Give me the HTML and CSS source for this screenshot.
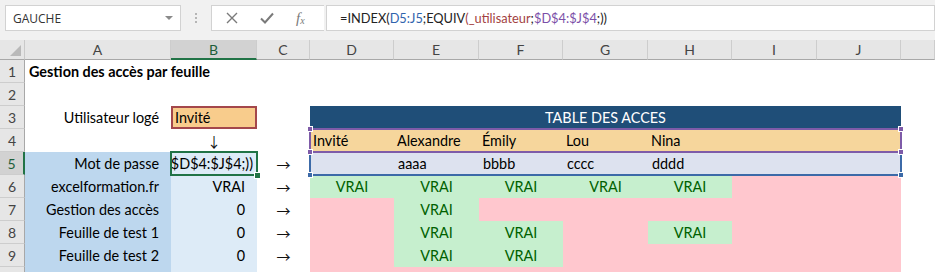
FILE: index.html
```html
<!DOCTYPE html>
<html lang="fr">
<head>
<meta charset="utf-8">
<title>Gestion des accès</title>
<link rel="stylesheet" href="styles.css">
</head>
<body>
<div class="app">
  <div class="fbar">
    <div class="namebox"><span class="nb-text">GAUCHE</span><span class="caret"></span></div>
    <div class="grip"><i></i><i></i><i></i></div>
    <div class="fbtns">
      <svg class="ico" width="12" height="12" viewBox="0 0 12 12"><path d="M1 1 L11 11 M11 1 L1 11" stroke="#7a7a7a" stroke-width="1.4" fill="none"/></svg>
      <svg class="ico" width="14" height="12" viewBox="0 0 14 12"><path d="M1 6.5 L5 10.5 L13 1.5" stroke="#7a7a7a" stroke-width="2" fill="none"/></svg>
      <span class="fx">f<sub>x</sub></span>
    </div>
    <div class="formula">=INDEX(<span class="c-blue">D5:J5</span>;EQUIV<span class="c-red">(_utilisateur</span>;<span class="c-purple">$D$4:$J$4</span>;))</div>
  </div>

  <div class="sheet">
    <!-- column headers -->
    <div class="corner"><span class="tri"></span></div>
    <div class="ch">A</div><div class="ch ch-sel">B</div><div class="ch">C</div><div class="ch">D</div><div class="ch">E</div><div class="ch">F</div><div class="ch">G</div><div class="ch">H</div><div class="ch">I</div><div class="ch">J</div><div class="ch"></div>

    <!-- row 1 -->
    <div class="rh">1</div>
    <div class="c title">Gestion des accès par feuille</div>
    <div class="c"></div><div class="c"></div><div class="c"></div><div class="c"></div><div class="c"></div><div class="c"></div><div class="c"></div><div class="c"></div><div class="c"></div><div class="c"></div>

    <!-- row 2 -->
    <div class="rh">2</div>
    <div class="c"></div><div class="c"></div><div class="c"></div><div class="c"></div><div class="c"></div><div class="c"></div><div class="c"></div><div class="c"></div><div class="c"></div><div class="c"></div><div class="c"></div>

    <!-- row 3 -->
    <div class="rh">3</div>
    <div class="c r lab">Utilisateur logé</div>
    <div class="c user">Invité</div>
    <div class="c"></div>
    <div class="c tbl-title">TABLE DES ACCES</div>
    <div class="c"></div>

    <!-- row 4 -->
    <div class="rh">4</div>
    <div class="c"></div>
    <div class="c ctr arrow">↓</div>
    <div class="c"></div>
    <div class="c name">Invité</div><div class="c name">Alexandre</div><div class="c name">Émily</div><div class="c name">Lou</div><div class="c name">Nina</div><div class="c name"></div><div class="c name"></div>
    <div class="c"></div>

    <!-- row 5 -->
    <div class="rh rh-sel">5</div>
    <div class="c r lab lbl">Mot de passe</div>
    <div class="c val clip"><span>=INDEX(D5:J5;EQUIV(_utilisateur;$D$4:$J$4;))</span></div>
    <div class="c ctr arrow">→</div>
    <div class="c pw"></div><div class="c pw">aaaa</div><div class="c pw">bbbb</div><div class="c pw">cccc</div><div class="c pw">dddd</div><div class="c pw"></div><div class="c pw"></div>
    <div class="c"></div>

    <!-- row 6 -->
    <div class="rh">6</div>
    <div class="c r lab lbl">excelformation.fr</div>
    <div class="c val r">VRAI</div>
    <div class="c ctr arrow">→</div>
    <div class="c ok">VRAI</div><div class="c ok">VRAI</div><div class="c ok">VRAI</div><div class="c ok">VRAI</div><div class="c ok">VRAI</div><div class="c no"></div><div class="c no"></div>
    <div class="c"></div>

    <!-- row 7 -->
    <div class="rh">7</div>
    <div class="c r lab lbl">Gestion des accès</div>
    <div class="c val r">0</div>
    <div class="c ctr arrow">→</div>
    <div class="c no"></div><div class="c ok">VRAI</div><div class="c no"></div><div class="c no"></div><div class="c no"></div><div class="c no"></div><div class="c no"></div>
    <div class="c"></div>

    <!-- row 8 -->
    <div class="rh">8</div>
    <div class="c r lab lbl">Feuille de test 1</div>
    <div class="c val r">0</div>
    <div class="c ctr arrow">→</div>
    <div class="c no"></div><div class="c ok">VRAI</div><div class="c ok">VRAI</div><div class="c no"></div><div class="c ok">VRAI</div><div class="c no"></div><div class="c no"></div>
    <div class="c"></div>

    <!-- row 9 -->
    <div class="rh">9</div>
    <div class="c r lab lbl">Feuille de test 2</div>
    <div class="c val r">0</div>
    <div class="c ctr arrow">→</div>
    <div class="c no"></div><div class="c ok">VRAI</div><div class="c ok">VRAI</div><div class="c no"></div><div class="c no"></div><div class="c no"></div><div class="c no"></div>
    <div class="c"></div>

    <!-- row 10 -->
    <div class="rh">10</div>
    <div class="c lbl"></div>
    <div class="c val"></div>
    <div class="c"></div>
    <div class="c no"></div><div class="c no"></div><div class="c no"></div><div class="c no"></div><div class="c no"></div><div class="c no"></div><div class="c no"></div>
    <div class="c"></div>

    <!-- range highlights (overlays, out of flow) -->
    <div class="range range-blue"><i class="h tl"></i><i class="h tr"></i><i class="h bl"></i><i class="h br"></i></div>
    <div class="range range-purple"><i class="h tl"></i><i class="h tr"></i><i class="h bl"></i><i class="h br"></i></div>
    <div class="active"><i class="fill"></i></div>
  </div>
</div>
</body>
</html>
```

FILE: styles.css
```css
* { box-sizing: border-box; }

html, body {
  margin: 0;
  padding: 0;
  background: #ffffff;
  overflow: hidden;
}

.app {
  width: 935px;
  height: 272px;
  overflow: hidden;
  font-family: Lato, "Open Sans", sans-serif;
}

/* ---------- formula bar ---------- */
.fbar {
  height: 40px;
  background: #f1f1f1;
  display: flex;
  align-items: flex-start;
  padding-top: 5px;
  padding-left: 5px;
}

.namebox {
  width: 176px;
  height: 26px;
  background: #fff;
  border: 1px solid #d2d2d2;
  display: flex;
  align-items: center;
  justify-content: space-between;
  padding: 0 7px 0 7px;
  font-family: "Open Sans", sans-serif;
  font-size: 12px;
  color: #333;
}

.caret {
  width: 0;
  height: 0;
  border-left: 4px solid transparent;
  border-right: 4px solid transparent;
  border-top: 4px solid #8a8a8a;
}

.grip {
  width: 30px;
  height: 26px;
  display: flex;
  flex-direction: column;
  align-items: center;
  justify-content: center;
  gap: 2px;
}
.grip i {
  display: block;
  width: 2px;
  height: 2px;
  background: #b5b5b5;
}

.fbtns {
  width: 113px;
  height: 26px;
  background: #fff;
  border: 1px solid #d2d2d2;
  border-right: none;
  display: flex;
  align-items: center;
  padding-left: 14px;
  gap: 22px;
}

.fx {
  font-family: "Liberation Serif", serif;
  font-style: italic;
  font-size: 15px;
  color: #7a7a7a;
  line-height: 1;
}
.fx sub {
  font-size: 10px;
  vertical-align: -1px;
}

.formula {
  flex: 1;
  height: 26px;
  background: #fff;
  border: 1px solid #d2d2d2;
  margin-left: 2px;
  padding-left: 13px;
  font-size: 12.8px;
  line-height: 24px;
  color: #222;
  white-space: nowrap;
}
.c-blue { color: #2f63ad; }
.c-red { color: #a33f3f; }
.c-purple { color: #7b4fa8; }

/* ---------- sheet ---------- */
.sheet {
  position: relative;
  display: grid;
  grid-template-columns: 25px 146px 86px 53px 84px 85px 84px 85px 84px 85px 84px 34px;
  grid-template-rows: 20px repeat(10, 23px);
  font-size: 14.4px;
  color: #000;
}

.corner {
  background: #e6e6e6;
  border-right: 1px solid #c9c9c9;
  border-bottom: 1px solid #a8a8a8;
  position: relative;
}
.tri {
  position: absolute;
  right: 3px;
  bottom: 3px;
  width: 0;
  height: 0;
  border-left: 11px solid transparent;
  border-bottom: 11px solid #b9b9b9;
}

.ch {
  background: #e6e6e6;
  border-right: 1px solid #cdcdcd;
  border-bottom: 1px solid #a8a8a8;
  text-align: center;
  line-height: 19px;
  color: #444;
  font-size: 14px;
}
.ch-sel {
  background: #d2d2d2;
  border-bottom: 2px solid #217346;
  color: #1e5e3a;
}

.rh {
  background: #e6e6e6;
  border-right: 1px solid #a8a8a8;
  border-bottom: 1px solid #cdcdcd;
  text-align: center;
  line-height: 24px;
  color: #444;
  font-size: 14px;
}
.rh-sel {
  background: #d2d2d2;
  border-right: 2px solid #217346;
  color: #1e5e3a;
}

.c {
  padding: 0 4px;
  line-height: 24px;
  white-space: nowrap;
}
.r { text-align: right; }
.ctr { text-align: center; }
.lab { padding-right: 12px; }

.title {
  font-weight: 700;
}

.user {
  background: #f8cc8c;
  border: 2px solid #a4474b;
  line-height: 19px;
  padding-left: 2px;
}

.arrow {
  font-family: "Noto Sans CJK JP", "DejaVu Sans", sans-serif;
  font-size: 14px;
  color: #111;
}

.tbl-title {
  grid-column: span 7;
  background: #1f4e78;
  color: #ffffff;
  text-align: center;
}

.name {
  background: #f6d69c;
  padding-left: 3px;
}

.pw {
  background: #dde2ef;
}

.lbl { background: #bdd7ee; }
.val { background: #ddebf7; padding-right: 12px; }

.clip {
  overflow: hidden;
  display: flex;
  justify-content: flex-end;
  padding-right: 4px;
}
.clip span { flex: none; }

.ok {
  background: #c6efce;
  color: #006100;
  text-align: center;
}
.no {
  background: #ffc7ce;
}

/* ---------- overlays (absolutely positioned in their grid area) ---------- */
.range {
  position: absolute;
  grid-column: 5 / 12;
  top: -1px;
  bottom: -1px;
  left: -1px;
  right: -1px;
}
.range-purple {
  grid-row: 5 / 6;
  border: 2px solid #7e5ba8;
}
.range-blue {
  grid-row: 6 / 7;
  border: 2px solid #3c6aa8;
}
.h {
  position: absolute;
  width: 6px;
  height: 6px;
  border: 1px solid #fff;
}
.range-purple .h { background: #7e5ba8; }
.range-blue .h { background: #3c6aa8; }
.h.tl { left: -4px; top: -4px; }
.h.tr { right: -4px; top: -4px; }
.h.bl { left: -4px; bottom: -4px; }
.h.br { right: -4px; bottom: -4px; }

.active {
  position: absolute;
  grid-column: 3 / 4;
  grid-row: 6 / 7;
  top: -1px;
  bottom: -1px;
  left: -1px;
  right: -1px;
  border: 2px solid #217346;
}
.fill {
  position: absolute;
  right: -5px;
  bottom: -5px;
  width: 7px;
  height: 7px;
  background: #217346;
  border: 1px solid #fff;
}
```
